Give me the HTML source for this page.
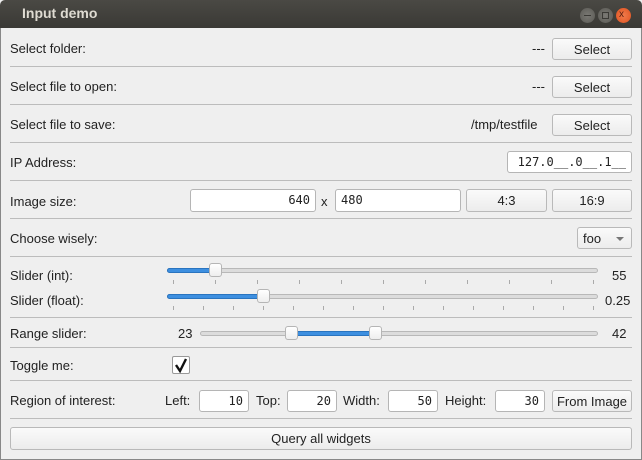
<!DOCTYPE html>
<html><head><meta charset="utf-8"><style>
*{box-sizing:border-box;margin:0;padding:0}
body{width:642px;height:460px;background:#efefef;font-family:"Liberation Sans","DejaVu Sans",sans-serif;font-size:13px;color:#222;position:relative;overflow:hidden}
.a{position:absolute}
.t{position:absolute;line-height:18px;white-space:nowrap}
.hr{position:absolute;left:10px;width:622px;height:1px;background:#bcbcbc}
.btn{position:absolute;border:1px solid #b9b9b9;border-radius:3px;background:linear-gradient(#fafafa,#ececec);text-align:center;line-height:21px;font-size:13px}
.inp{position:absolute;border:1px solid #b5b5b5;border-radius:3px;background:#fff;font-family:"DejaVu Sans Mono","Liberation Mono",monospace;font-size:12px;line-height:21px;padding:0 5px}
.tr{position:absolute;height:5px;border:1px solid #b8b8b8;border-radius:3px;background:#dcdcdc}
.fill{position:absolute;height:5px;border-radius:3px;background:#3d8fe0;border:1px solid #2a74bf}
.h{position:absolute;width:13px;height:14px;border:1px solid #b5b5b5;border-radius:3px;background:linear-gradient(#fff,#eee)}
.tk{position:absolute;width:1px;height:4px;background:#aaa}
</style></head><body>
<div class="a" style="left:0;top:0;width:642px;height:28px;background:linear-gradient(#4a4944,#3a3935);border-radius:5px 5px 0 0"></div>
<div class="t" style="left:22px;top:4px;color:#dfdbd2;font-weight:bold;font-size:14px">Input demo</div>
<div class="a" style="left:580px;top:8px;width:15px;height:15px;border-radius:50%;background:radial-gradient(#7a7974,#5a5954)"></div>
<div class="a" style="left:584px;top:15px;width:7px;height:1px;background:#3a3935"></div>
<div class="a" style="left:598px;top:8px;width:15px;height:15px;border-radius:50%;background:radial-gradient(#7a7974,#5a5954)"></div>
<div class="a" style="left:602px;top:12px;width:7px;height:7px;border:1px solid #3a3935"></div>
<div class="a" style="left:616px;top:8px;width:15px;height:15px;border-radius:50%;background:radial-gradient(#f07b4c,#e0521f)"></div>
<div class="t" style="left:619px;top:6px;font-size:10px;color:#5a2010">x</div>
<div class="a" style="left:0;top:28px;width:1px;height:432px;background:#888"></div>
<div class="a" style="left:641px;top:28px;width:1px;height:432px;background:#888"></div>
<div class="a" style="left:0;top:459px;width:642px;height:1px;background:#888"></div>

<div class="t" style="left:10px;top:40px">Select folder:</div>
<div class="t" style="left:532px;top:40px">---</div>
<div class="btn" style="left:552px;top:38px;width:80px;height:22px">Select</div>
<div class="hr" style="top:66px"></div>
<div class="t" style="left:10px;top:78px">Select file to open:</div>
<div class="t" style="left:532px;top:78px">---</div>
<div class="btn" style="left:552px;top:76px;width:80px;height:22px">Select</div>
<div class="hr" style="top:104px"></div>
<div class="t" style="left:10px;top:116px">Select file to save:</div>
<div class="t" style="left:471px;top:116px">/tmp/testfile</div>
<div class="btn" style="left:552px;top:114px;width:80px;height:22px">Select</div>
<div class="hr" style="top:142px"></div>
<div class="t" style="left:10px;top:154px">IP Address:</div>
<div class="inp" style="left:507px;top:151px;width:125px;height:22px;text-align:right">127.0__.0__.1__</div>
<div class="hr" style="top:180px"></div>
<div class="t" style="left:10px;top:193px">Image size:</div>
<div class="inp" style="left:190px;top:189px;width:126px;height:23px;text-align:right">640</div>
<div class="t" style="left:321px;top:193px">x</div>
<div class="inp" style="left:335px;top:189px;width:126px;height:23px">480</div>
<div class="btn" style="left:466px;top:189px;width:81px;height:23px">4:3</div>
<div class="btn" style="left:552px;top:189px;width:80px;height:23px">16:9</div>
<div class="hr" style="top:218px"></div>
<div class="t" style="left:10px;top:230px">Choose wisely:</div>
<div class="btn" style="left:577px;top:227px;width:55px;height:22px;text-align:left;padding-left:5px">foo</div>
<div class="a" style="left:616px;top:237px;border-left:4px solid transparent;border-right:4px solid transparent;border-top:4px solid #777"></div>
<div class="hr" style="top:256px"></div>

<div class="t" style="left:10px;top:267px">Slider (int):</div>
<div class="tr" style="left:167px;top:268px;width:431px"></div>
<div class="fill" style="left:167px;top:268px;width:46px"></div>
<div class="h" style="left:209px;top:263px"></div>
<div class="t" style="left:612px;top:267px">55</div>
<div class="t" style="left:10px;top:292px">Slider (float):</div>
<div class="tr" style="left:167px;top:294px;width:431px"></div>
<div class="fill" style="left:167px;top:294px;width:94px"></div>
<div class="h" style="left:257px;top:289px"></div>
<div class="t" style="left:605px;top:292px">0.25</div>
<div id="tk"></div>
<div class="hr" style="top:317px"></div>
<div class="t" style="left:10px;top:325px">Range slider:</div>
<div class="t" style="left:178px;top:325px">23</div>
<div class="tr" style="left:200px;top:331px;width:398px"></div>
<div class="fill" style="left:292px;top:331px;width:84px"></div>
<div class="h" style="left:285px;top:326px"></div>
<div class="h" style="left:369px;top:326px"></div>
<div class="t" style="left:612px;top:325px">42</div>
<div class="hr" style="top:347px"></div>
<div class="t" style="left:10px;top:357px">Toggle me:</div>
<div class="a" style="left:172px;top:356px;width:18px;height:18px;border:1px solid #999;background:#fff;border-radius:2px"></div>
<svg class="a" style="left:172px;top:356px" width="18" height="18"><path d="M4 9 L8 15 L14 3" fill="none" stroke="#111" stroke-width="2.4"/></svg>
<div class="hr" style="top:380px"></div>
<div class="t" style="left:10px;top:392px">Region of interest:</div>
<div class="t" style="left:165px;top:392px">Left:</div>
<div class="inp" style="left:199px;top:390px;width:50px;height:22px;text-align:right">10</div>
<div class="t" style="left:256px;top:392px">Top:</div>
<div class="inp" style="left:287px;top:390px;width:50px;height:22px;text-align:right">20</div>
<div class="t" style="left:343px;top:392px">Width:</div>
<div class="inp" style="left:388px;top:390px;width:50px;height:22px;text-align:right">50</div>
<div class="t" style="left:445px;top:392px">Height:</div>
<div class="inp" style="left:495px;top:390px;width:50px;height:22px;text-align:right">30</div>
<div class="btn" style="left:552px;top:390px;width:80px;height:22px">From Image</div>
<div class="hr" style="top:418px"></div>
<div class="btn" style="left:10px;top:427px;width:622px;height:23px">Query all widgets</div>
<script>
var s='';for(var i=0;i<11;i++)s+='<div class="tk" style="left:'+(173+i*42)+'px;top:280px"></div>';
for(var i=0;i<15;i++)s+='<div class="tk" style="left:'+(173+i*30)+'px;top:306px"></div>';
document.getElementById('tk').innerHTML=s;
</script>
</body></html>
